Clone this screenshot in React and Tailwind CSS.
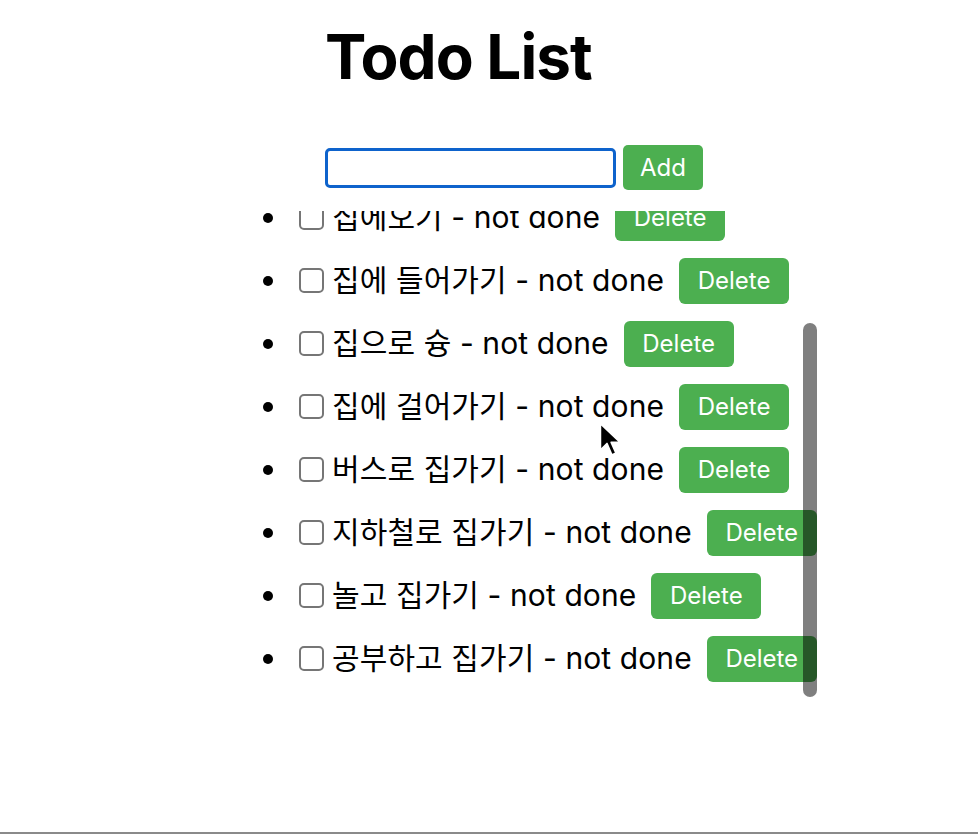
import React, { useEffect, useRef } from "react";

const todos = [
  "집에 가기",
  "빨리 집가기",
  "집에오기",
  "집에 들어가기",
  "집으로 슝",
  "집에 걸어가기",
  "버스로 집가기",
  "지하철로 집가기",
  "놀고 집가기",
  "공부하고 집가기",
];

const Cursor = () => (
  <svg
    className="absolute left-[598px] top-[422px] pointer-events-none"
    width="24"
    height="37"
    viewBox="0 0 20 30"
  >
    <path
      d="M2 1 L2 23 L7.5 17.5 L11.5 27 L15 25.5 L11 16.5 L18.5 16.5 Z"
      fill="#000"
      stroke="#fff"
      strokeWidth="1.4"
      strokeLinejoin="round"
    />
  </svg>
);

const App = () => {
  const listRef = useRef(null);

  useEffect(() => {
    if (listRef.current) listRef.current.scrollTop = listRef.current.scrollHeight;
  }, []);

  return (
    <div className="relative h-[834px] bg-white border-b-2 border-[#8a8a8a] font-['Inter','Noto_Sans_CJK_KR',sans-serif] text-black">
      <div className="pl-[325px] pt-[20px]">
        <h1 className="text-[62px] font-bold leading-[1.2] tracking-[-1px]">Todo List</h1>
        <div className="mt-[51px] flex items-center gap-[7px]">
          <input
            type="text"
            className="w-[291px] h-[40px] border-[3px] border-[#0e63cc] rounded-[5px] outline-none px-2 text-[22px]"
          />
          <button className="w-[80px] h-[45px] bg-[#4caf50] text-white text-[24px] rounded-[5px] flex items-center justify-center">
            Add
          </button>
        </div>
      </div>

      <div className="relative mt-[21px] ml-[250px] w-[568px] h-[488px]">
        <div ref={listRef} className="h-full overflow-y-auto [scrollbar-width:none]">
          <ul className="pb-[9px]">
            {todos.map((todo, index) => (
              <li key={index} className="h-[63px] flex items-center">
                <span className="ml-[13px] mr-[26px] w-[10px] h-[10px] rounded-full bg-black shrink-0" />
                <input
                  type="checkbox"
                  className="appearance-none w-[25px] h-[25px] border-2 border-[#767676] rounded-[5px] bg-white shrink-0"
                />
                <span className="ml-[8px] text-[30px] tracking-[0.1px] whitespace-nowrap">{todo} - not done</span>
                <button className="ml-[15px] h-[46px] w-[110px] bg-[#4caf50] text-white text-[24px] rounded-[6px] shrink-0">
                  Delete
                </button>
              </li>
            ))}
          </ul>
        </div>
        <div className="absolute right-[1px] top-[112px] w-[14px] h-[374px] rounded-full bg-black/50" />
      </div>

      <Cursor />
    </div>
  );
};

export default App;
